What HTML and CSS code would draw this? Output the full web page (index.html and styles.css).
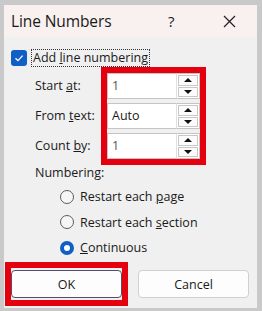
FILE: index.html
```html
<!DOCTYPE html>
<html lang="en">
  <head>
    <meta charset="UTF-8" />
    <title>Line Numbers</title>
    <link rel="stylesheet" href="styles.css">
  </head>
  <body>
    <div class="frame">
      <div class="dialog">
        <div class="titlebar">
          <span class="title">Line Numbers</span>
          <span class="help">?</span>
          <span class="close">
            <svg width="13" height="13" viewBox="0 0 13 13">
              <path d="M1 1 L12 12 M12 1 L1 12" stroke="#222" stroke-width="1.2" fill="none" />
            </svg>
          </span>
        </div>

        <div class="content">
          <div class="check-row">
            <span class="checkbox">
              <svg width="10" height="10" viewBox="0 0 10 10">
                <path d="M1.5 5.2 L4 7.6 L8.6 2.6" stroke="#fff" stroke-width="1.3" fill="none" />
              </svg>
            </span>
            <span class="focus">Add <u>l</u>ine numbering</span>
          </div>

          <div class="fields">
            <div class="labels">
              <div class="field-label">Start <u>a</u>t:</div>
              <div class="field-label">From <u>t</u>ext:</div>
              <div class="field-label">Count <u>b</u>y:</div>
            </div>
            <div class="highlight spins">
              <div class="spin">
                <div class="spin-text">1</div>
                <div class="spin-buttons"><span class="arrow up"></span><span class="arrow down"></span></div>
              </div>
              <div class="spin">
                <div class="spin-text dark">Auto</div>
                <div class="spin-buttons"><span class="arrow up"></span><span class="arrow down"></span></div>
              </div>
              <div class="spin">
                <div class="spin-text">1</div>
                <div class="spin-buttons"><span class="arrow up"></span><span class="arrow down"></span></div>
              </div>
            </div>
          </div>

          <div class="numbering-label">Numbering:</div>
          <div class="radios">
            <div class="radio-row"><span class="radio"></span><span>Restart each <u>p</u>age</span></div>
            <div class="radio-row"><span class="radio"></span><span>Restart each <u>s</u>ection</span></div>
            <div class="radio-row"><span class="radio checked"></span><span><u>C</u>ontinuous</span></div>
          </div>
        </div>

        <div class="buttons">
          <div class="highlight ok-wrap"><button class="btn default">OK</button></div>
          <button class="btn">Cancel</button>
        </div>
      </div>
    </div>
  </body>
</html>
```

FILE: styles.css
```css
body {
  margin: 0;
  padding: 0;
  font-family: "Open Sans", "Noto Sans", sans-serif;
  color: #1a1a1a;
}
.frame {
  width: 262px;
  height: 311px;
  box-sizing: border-box;
  background-color: #c9c9c9;
  padding: 5px 5px 3px 4px;
}
.dialog {
  height: 100%;
  background-color: #f0f0f0;
  display: flex;
  flex-direction: column;
}
.titlebar {
  height: 32px;
  background-color: #f9f1ef;
  display: flex;
  align-items: center;
  padding-left: 7px;
}
.title {
  font-size: 15.5px;
  width: 157px;
  letter-spacing: -0.1px;
}
.help {
  font-size: 15px;
  width: 55px;
}
.close {
  display: flex;
}
.content {
  padding: 12px 0 0 7px;
  font-size: 12.5px;
}
.check-row {
  display: flex;
  align-items: center;
  height: 18px;
}
.checkbox {
  width: 16px;
  height: 16px;
  border-radius: 3px;
  background-color: #0f5fc4;
  display: flex;
  align-items: center;
  justify-content: center;
}
.focus {
  margin-left: 4px;
  padding: 0 1px;
  border: 1px dotted #333;
  line-height: 16px;
}
.fields {
  display: flex;
}
.labels {
  margin-left: 24px;
  width: 66px;
  padding-top: 6px;
  display: flex;
  flex-direction: column;
  gap: 4px;
}
.field-label {
  height: 26px;
  line-height: 26px;
}
.highlight {
  border: 6px solid #e4000f;
}
.spins {
  width: 93px;
  display: flex;
  flex-direction: column;
  gap: 4px;
}
.spin {
  height: 26px;
  display: flex;
  background-color: #fff;
}
.spin-text {
  flex: 1;
  border: 1px solid #c4c4c4;
  border-right: none;
  padding-left: 4px;
  line-height: 24px;
  color: #555;
}
.spin-text.dark {
  color: #1a1a1a;
}
.spin-buttons {
  width: 22px;
  display: flex;
  flex-direction: column;
  border: 1px solid #c4c4c4;
  border-left: 1px solid #e0e0e0;
}
.arrow {
  flex: 1;
  display: flex;
  align-items: center;
  justify-content: center;
  border: 1px solid #c8c8c8;
  margin: 1px 1px 0 1px;
  background-color: #fbfbfb;
}
.arrow.down {
  margin-bottom: 1px;
}
.arrow::after {
  content: "";
  border-left: 4px solid transparent;
  border-right: 4px solid transparent;
}
.arrow.up::after {
  border-bottom: 4px solid #111;
}
.arrow.down::after {
  border-top: 4px solid #111;
}
.numbering-label {
  margin-left: 24px;
  line-height: 18px;
  margin-top: -1px;
}
.radios {
  margin-left: 49px;
  margin-top: 2px;
}
.radio-row {
  height: 25.5px;
  display: flex;
  align-items: center;
}
.radio {
  width: 14px;
  height: 14px;
  box-sizing: border-box;
  border: 1px solid #5d5d5d;
  border-radius: 50%;
  background-color: #f6f6f6;
  margin-right: 6px;
}
.radio.checked {
  border: 4px solid #0f5fc4;
  background-color: #fff;
}
.buttons {
  margin-top: auto;
  display: flex;
  align-items: center;
  gap: 10px;
  padding: 0 0 2px 1px;
}
.ok-wrap {
  padding: 2px 0;
}
.btn {
  width: 111px;
  height: 28px;
  font-family: "Open Sans", "Noto Sans", sans-serif;
  font-size: 12.5px;
  color: #1a1a1a;
  background-color: #fdfdfd;
  border: 1px solid #d0d0d0;
  border-radius: 4px;
  display: block;
}
.btn.default {
  border: 1px solid #5a4a6a;
}
```
